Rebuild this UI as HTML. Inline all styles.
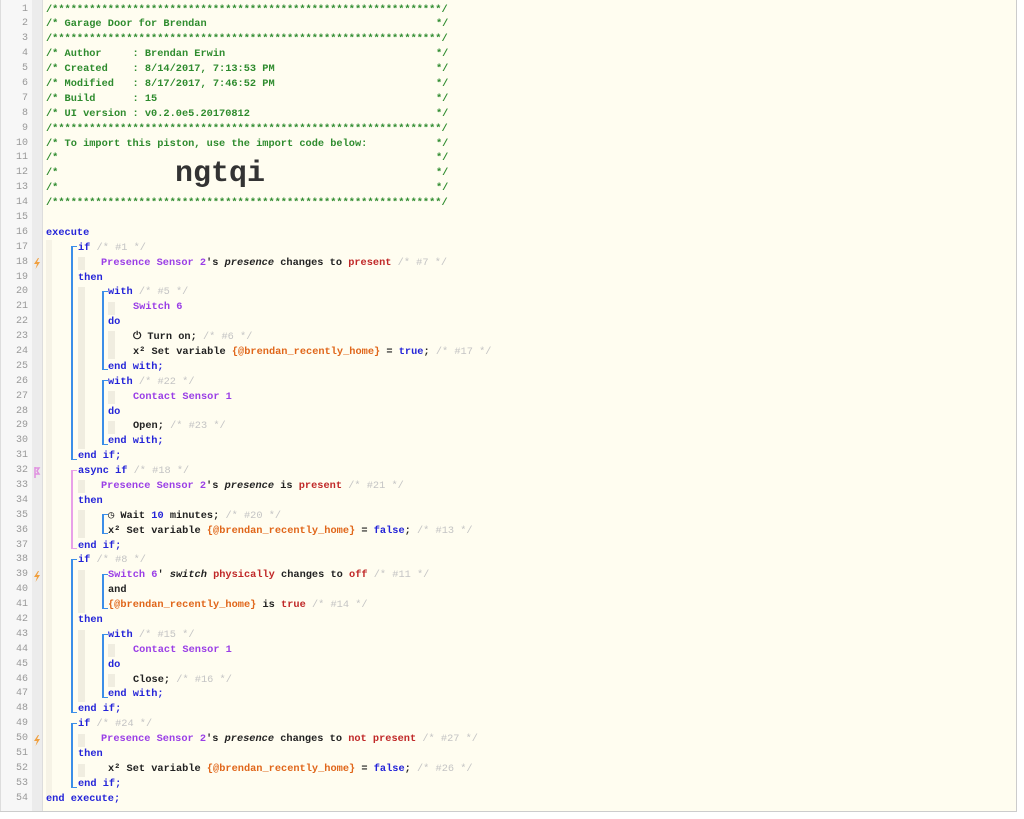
<!DOCTYPE html>
<html><head><meta charset="utf-8"><style>
html,body{margin:0;padding:0;background:#fff;width:1024px;height:819px;overflow:hidden}
#f{position:absolute;left:0;top:0;width:1016px;height:811px;border-right:1px solid #ccc;border-bottom:1px solid #ccc;background:#fffdf0}
#g{position:absolute;left:0;top:0;width:31px;height:811px;background:#f7f7f7;border-left:1px solid #ddd}
#g2{position:absolute;left:32px;top:0;width:10px;height:811px;background:#ececec;border-right:1px solid #ddd}
#nums{position:absolute;left:0;top:2.5px;width:28px;text-align:right;font:10px "Liberation Mono",monospace;color:#999}
#nums div,#code>div{height:14.906px;line-height:14.906px}
#code{position:absolute;left:0;top:2.5px;font:bold 10.3px "Liberation Mono",monospace;color:#222}
#code>div{position:relative;white-space:pre}
.e{position:absolute;left:436px}
.h{color:#2e8b2e}
.k{color:#2424d8}
.d{color:#9a3ee6}
.v{color:#e0661a}
.r{color:#c02828}
.c{color:#c4c4c4;font-weight:normal}
i{font-style:italic}
.x{position:absolute;top:calc(var(--a) * 14.906px - 7.4px);height:calc((var(--b) - var(--a)) * 14.906px + 3px);width:4px;border:1px solid #3b8ee8;border-left:2px solid #3b8ee8;border-right:none;box-sizing:content-box}
.x.p{border-color:#e8a0e8}
.s{position:absolute;width:7px;background:#f0ede0;top:calc(var(--a) * 14.906px - 11.4px);height:calc((var(--b) - var(--a) + 1) * 14.906px - 2px)}
</style></head><body>
<div id="f"></div><div id="g"></div><div id="g2"></div>
<div style="position:absolute;left:46px;top:240px;height:556px;width:6px;background:#f6f3e6"></div>

<div class="s" style="left:78px;--a:18;--b:18"></div>
<div class="s" style="left:78px;--a:20;--b:30"></div>
<div class="s" style="left:78px;--a:33;--b:33"></div>
<div class="s" style="left:78px;--a:35;--b:36"></div>
<div class="s" style="left:78px;--a:39;--b:41"></div>
<div class="s" style="left:78px;--a:43;--b:47"></div>
<div class="s" style="left:78px;--a:50;--b:50"></div>
<div class="s" style="left:78px;--a:52;--b:52"></div>
<div class="s" style="left:108px;--a:21;--b:21"></div>
<div class="s" style="left:108px;--a:23;--b:24"></div>
<div class="s" style="left:108px;--a:27;--b:27"></div>
<div class="s" style="left:108px;--a:29;--b:29"></div>
<div class="s" style="left:108px;--a:44;--b:44"></div>
<div class="s" style="left:108px;--a:46;--b:46"></div>

<div class="x" style="left:71px;--a:17;--b:31"></div>
<div class="x" style="left:102px;--a:20;--b:25"></div>
<div class="x" style="left:102px;--a:26;--b:30"></div>
<div class="x p" style="left:71px;--a:32;--b:37"></div>
<div class="x" style="left:102px;--a:35;--b:36"></div>
<div class="x" style="left:71px;--a:38;--b:48"></div>
<div class="x" style="left:102px;--a:39;--b:41"></div>
<div class="x" style="left:102px;--a:43;--b:47"></div>
<div class="x" style="left:71px;--a:49;--b:53"></div>

<svg style="position:absolute;left:33px;top:258px" width="8" height="11" viewBox="0 0 8 11"><path d="M5 0 L1 6 L4 6 L2.5 11 L7 4 L4 4 L6 0Z" fill="#f0a040"/></svg>
<svg style="position:absolute;left:33px;top:571px" width="8" height="11" viewBox="0 0 8 11"><path d="M5 0 L1 6 L4 6 L2.5 11 L7 4 L4 4 L6 0Z" fill="#f0a040"/></svg>
<svg style="position:absolute;left:33px;top:735px" width="8" height="11" viewBox="0 0 8 11"><path d="M5 0 L1 6 L4 6 L2.5 11 L7 4 L4 4 L6 0Z" fill="#f0a040"/></svg>
<svg style="position:absolute;left:33px;top:467px" width="8" height="11" viewBox="0 0 8 11"><path d="M2 0 V11 M2 1 H6 L4 4 L6 7 H2" stroke="#e090e0" stroke-width="1.5" fill="none"/></svg>

<div id="nums"><div>1</div><div>2</div><div>3</div><div>4</div><div>5</div><div>6</div><div>7</div><div>8</div><div>9</div><div>10</div><div>11</div><div>12</div><div>13</div><div>14</div><div>15</div><div>16</div><div>17</div><div>18</div><div>19</div><div>20</div><div>21</div><div>22</div><div>23</div><div>24</div><div>25</div><div>26</div><div>27</div><div>28</div><div>29</div><div>30</div><div>31</div><div>32</div><div>33</div><div>34</div><div>35</div><div>36</div><div>37</div><div>38</div><div>39</div><div>40</div><div>41</div><div>42</div><div>43</div><div>44</div><div>45</div><div>46</div><div>47</div><div>48</div><div>49</div><div>50</div><div>51</div><div>52</div><div>53</div><div>54</div></div>

<div id="code">
<div style="padding-left:46px" class="h">/***************************************************************/</div>
<div style="padding-left:46px" class="h">/* Garage Door for Brendan<span class="e">*/</span></div>
<div style="padding-left:46px" class="h">/***************************************************************/</div>
<div style="padding-left:46px" class="h">/* Author     : Brendan Erwin<span class="e">*/</span></div>
<div style="padding-left:46px" class="h">/* Created    : 8/14/2017, 7:13:53 PM<span class="e">*/</span></div>
<div style="padding-left:46px" class="h">/* Modified   : 8/17/2017, 7:46:52 PM<span class="e">*/</span></div>
<div style="padding-left:46px" class="h">/* Build      : 15<span class="e">*/</span></div>
<div style="padding-left:46px" class="h">/* UI version : v0.2.0e5.20170812<span class="e">*/</span></div>
<div style="padding-left:46px" class="h">/***************************************************************/</div>
<div style="padding-left:46px" class="h">/* To import this piston, use the import code below:<span class="e">*/</span></div>
<div style="padding-left:46px" class="h">/*<span class="e">*/</span></div>
<div style="padding-left:46px" class="h">/*<span style="position:absolute;left:175px;top:-5px;font-size:30px;line-height:26px;color:#333;font-family:'Liberation Mono','DejaVu Sans Mono',monospace">ngtqi</span><span class="e">*/</span></div>
<div style="padding-left:46px" class="h">/*<span class="e">*/</span></div>
<div style="padding-left:46px" class="h">/***************************************************************/</div>
<div> </div>
<div style="padding-left:46px"><span class="k">execute</span></div>
<div style="padding-left:78px"><span class="k">if</span> <span class="c">/* #1 */</span></div>
<div style="padding-left:101px"><span class="d">Presence Sensor 2</span>'s <i>presence</i> changes to <span class="r">present</span> <span class="c">/* #7 */</span></div>
<div style="padding-left:78px"><span class="k">then</span></div>
<div style="padding-left:108px"><span class="k">with</span> <span class="c">/* #5 */</span></div>
<div style="padding-left:133px"><span class="d">Switch 6</span></div>
<div style="padding-left:108px"><span class="k">do</span></div>
<div style="padding-left:133px">⏻ Turn on; <span class="c">/* #6 */</span></div>
<div style="padding-left:133px">x² Set variable <span class="v">{@brendan_recently_home}</span> = <span class="k">true</span>; <span class="c">/* #17 */</span></div>
<div style="padding-left:108px"><span class="k">end with;</span></div>
<div style="padding-left:108px"><span class="k">with</span> <span class="c">/* #22 */</span></div>
<div style="padding-left:133px"><span class="d">Contact Sensor 1</span></div>
<div style="padding-left:108px"><span class="k">do</span></div>
<div style="padding-left:133px">Open; <span class="c">/* #23 */</span></div>
<div style="padding-left:108px"><span class="k">end with;</span></div>
<div style="padding-left:78px"><span class="k">end if;</span></div>
<div style="padding-left:78px"><span class="k">async if</span> <span class="c">/* #18 */</span></div>
<div style="padding-left:101px"><span class="d">Presence Sensor 2</span>'s <i>presence</i> is <span class="r">present</span> <span class="c">/* #21 */</span></div>
<div style="padding-left:78px"><span class="k">then</span></div>
<div style="padding-left:108px">◷ Wait <span class="k">10</span> minutes; <span class="c">/* #20 */</span></div>
<div style="padding-left:108px">x² Set variable <span class="v">{@brendan_recently_home}</span> = <span class="k">false</span>; <span class="c">/* #13 */</span></div>
<div style="padding-left:78px"><span class="k">end if;</span></div>
<div style="padding-left:78px"><span class="k">if</span> <span class="c">/* #8 */</span></div>
<div style="padding-left:108px"><span class="d">Switch 6</span>' <i>switch</i> <span class="r">physically</span> changes to <span class="r">off</span> <span class="c">/* #11 */</span></div>
<div style="padding-left:108px">and</div>
<div style="padding-left:108px"><span class="v">{@brendan_recently_home}</span> is <span class="r">true</span> <span class="c">/* #14 */</span></div>
<div style="padding-left:78px"><span class="k">then</span></div>
<div style="padding-left:108px"><span class="k">with</span> <span class="c">/* #15 */</span></div>
<div style="padding-left:133px"><span class="d">Contact Sensor 1</span></div>
<div style="padding-left:108px"><span class="k">do</span></div>
<div style="padding-left:133px">Close; <span class="c">/* #16 */</span></div>
<div style="padding-left:108px"><span class="k">end with;</span></div>
<div style="padding-left:78px"><span class="k">end if;</span></div>
<div style="padding-left:78px"><span class="k">if</span> <span class="c">/* #24 */</span></div>
<div style="padding-left:101px"><span class="d">Presence Sensor 2</span>'s <i>presence</i> changes to <span class="r">not present</span> <span class="c">/* #27 */</span></div>
<div style="padding-left:78px"><span class="k">then</span></div>
<div style="padding-left:108px">x² Set variable <span class="v">{@brendan_recently_home}</span> = <span class="k">false</span>; <span class="c">/* #26 */</span></div>
<div style="padding-left:78px"><span class="k">end if;</span></div>
<div style="padding-left:46px"><span class="k">end execute;</span></div>
</div>
</body></html>
